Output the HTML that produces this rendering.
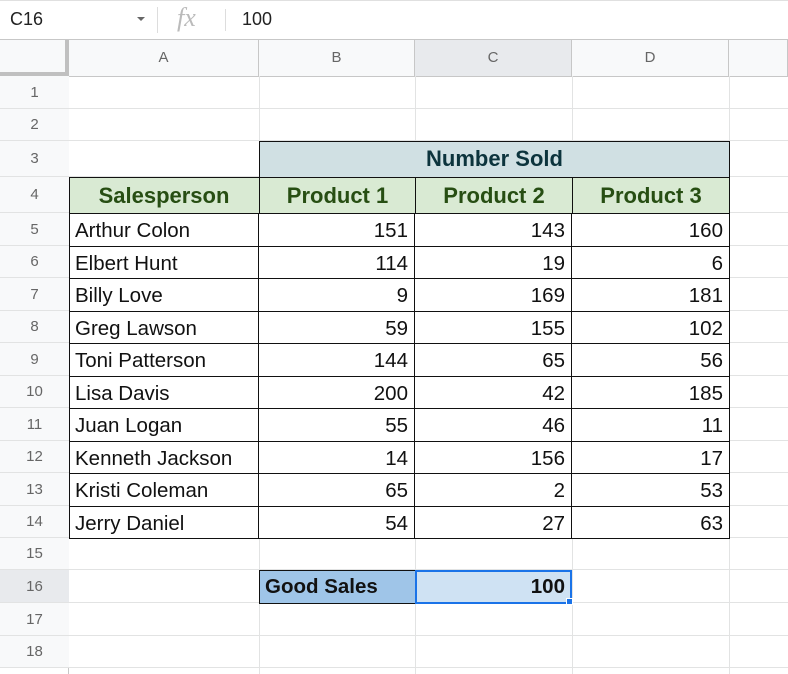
<!DOCTYPE html><html><head><style>
body{margin:0;width:788px;height:674px;overflow:hidden;background:#fff;font-family:"Liberation Sans",Arial,sans-serif;position:relative}
div{position:absolute;box-sizing:border-box}
.vl{width:1px;background:#e2e3e3}
.hl{height:1px;background:#e2e3e3}
.rh{left:0;width:69px;text-align:center;color:#666;font-size:15px;background:#f8f9fa}
.ch{top:40px;height:36px;line-height:36px;text-align:center;color:#666;font-size:15px;background:#f8f9fa;border-right:1px solid #c7c7c7}
.c{font-size:20.5px;color:#111;padding:0 6px 0 5px;white-space:nowrap;overflow:hidden}
.r{text-align:right}
.g{text-align:center;font-size:22px;font-weight:bold;color:#274e13;height:37px;line-height:37px;top:177px}
</style></head><body>
<div style="left:0;top:0;width:788px;height:40px;border-bottom:1px solid #c7c7c7;border-top:1px solid #e0e0e0"></div>
<div style="left:10px;top:9px;font-size:18px;color:#222">C16</div>
<div style="left:137px;top:17px;width:0;height:0;border-left:4px solid transparent;border-right:4px solid transparent;border-top:4px solid #666"></div>
<div style="left:157px;top:7px;width:1px;height:26px;background:#ddd"></div>
<div style="left:177px;top:3px;font-family:'Liberation Serif',serif;font-style:italic;font-size:26px;color:#bbb">fx</div>
<div style="left:225px;top:9px;width:1px;height:22px;background:#ddd"></div>
<div style="left:242px;top:9px;font-size:18px;color:#222">100</div>
<div style="left:0;top:40px;width:69px;height:36px;background:#f8f9fa;border-right:4px solid #c0c0c0;border-bottom:4px solid #c0c0c0"></div>
<div class="ch" style="left:69px;width:190px">A</div>
<div class="ch" style="left:259px;width:156px">B</div>
<div class="ch" style="left:415px;width:157px;background:#e8eaed">C</div>
<div class="ch" style="left:572px;width:157px">D</div>
<div class="ch" style="left:729px;width:59px"></div>
<div style="left:0;top:76px;width:788px;height:1px;background:#c7c7c7"></div>
<div style="left:68px;top:76px;width:1px;height:598px;background:#c7c7c7"></div>
<div class="vl" style="left:259px;top:76px;height:598px"></div>
<div class="vl" style="left:415px;top:76px;height:598px"></div>
<div class="vl" style="left:572px;top:76px;height:598px"></div>
<div class="vl" style="left:729px;top:76px;height:598px"></div>
<div id="rows"></div>
<script>
var tops=[76,109,141,177,213,246,278,311,343,376,408,441,473,506,538,570,603,636,668,674];
var h='';
for(var i=0;i<18;i++){var t=tops[i],hh=tops[i+1]-t;
h+='<div class="rh" style="top:'+t+'px;height:'+hh+'px;line-height:'+hh+'px;'+(i==15?'background:#e8eaed;':'')+'">'+(i+1)+'</div>';
h+='<div class="hl" style="left:0;top:'+(tops[i+1]-1)+'px;width:788px"></div>';}
document.getElementById('rows').innerHTML=h;
</script>
<div style="left:259px;top:141px;width:471px;height:37px;background:#d0e0e3;border:1.5px solid #111;text-align:center;line-height:34px;font-size:22px;font-weight:bold;color:#0c343d">Number Sold</div>
<div style="left:69px;top:177px;width:661px;height:37px;background:#d9ead3;border:1.5px solid #111"></div>
<div class="g" style="left:69px;width:190px">Salesperson</div>
<div class="g" style="left:259px;width:156px;border-left:1.5px solid #111">Product 1</div>
<div class="g" style="left:415px;width:157px;border-left:1.5px solid #111">Product 2</div>
<div class="g" style="left:572px;width:158px;border-left:1.5px solid #111;border-right:1.5px solid #111">Product 3</div>
<div id="data"></div>
<script>
var d=[["Arthur Colon",151,143,160],["Elbert Hunt",114,19,6],["Billy Love",9,169,181],["Greg Lawson",59,155,102],["Toni Patterson",144,65,56],["Lisa Davis",200,42,185],["Juan Logan",55,46,11],["Kenneth Jackson",14,156,17],["Kristi Coleman",65,2,53],["Jerry Daniel",54,27,63]];
var xs=[69,259,415,572,730],s='';
for(var i=0;i<10;i++){var t=tops[4+i],hh=tops[5+i]-t;
for(var j=0;j<4;j++){s+='<div class="c'+(j?' r':'')+'" style="background:#fff;left:'+xs[j]+'px;top:'+t+'px;width:'+(xs[j+1]-xs[j])+'px;height:'+(hh+1)+'px;line-height:'+(hh+1)+'px;border:1.5px solid #111;'+(j?'border-left:none;':'')+'">'+d[i][j]+'</div>';}}
document.getElementById('data').innerHTML=s;
</script>
<div class="c" style="left:259px;top:570px;width:157px;height:34px;line-height:31px;background:#9fc5e8;border:1.5px solid #111;font-weight:bold">Good Sales</div>
<div class="c r" style="left:415px;top:570px;width:157px;height:34px;line-height:30px;background:#cfe2f3;border:2px solid #1a73e8;font-weight:bold;padding-right:5px">100</div>
<div style="left:566px;top:598px;width:7px;height:7px;background:#1a73e8;border:1px solid #fff"></div>
</body></html>
